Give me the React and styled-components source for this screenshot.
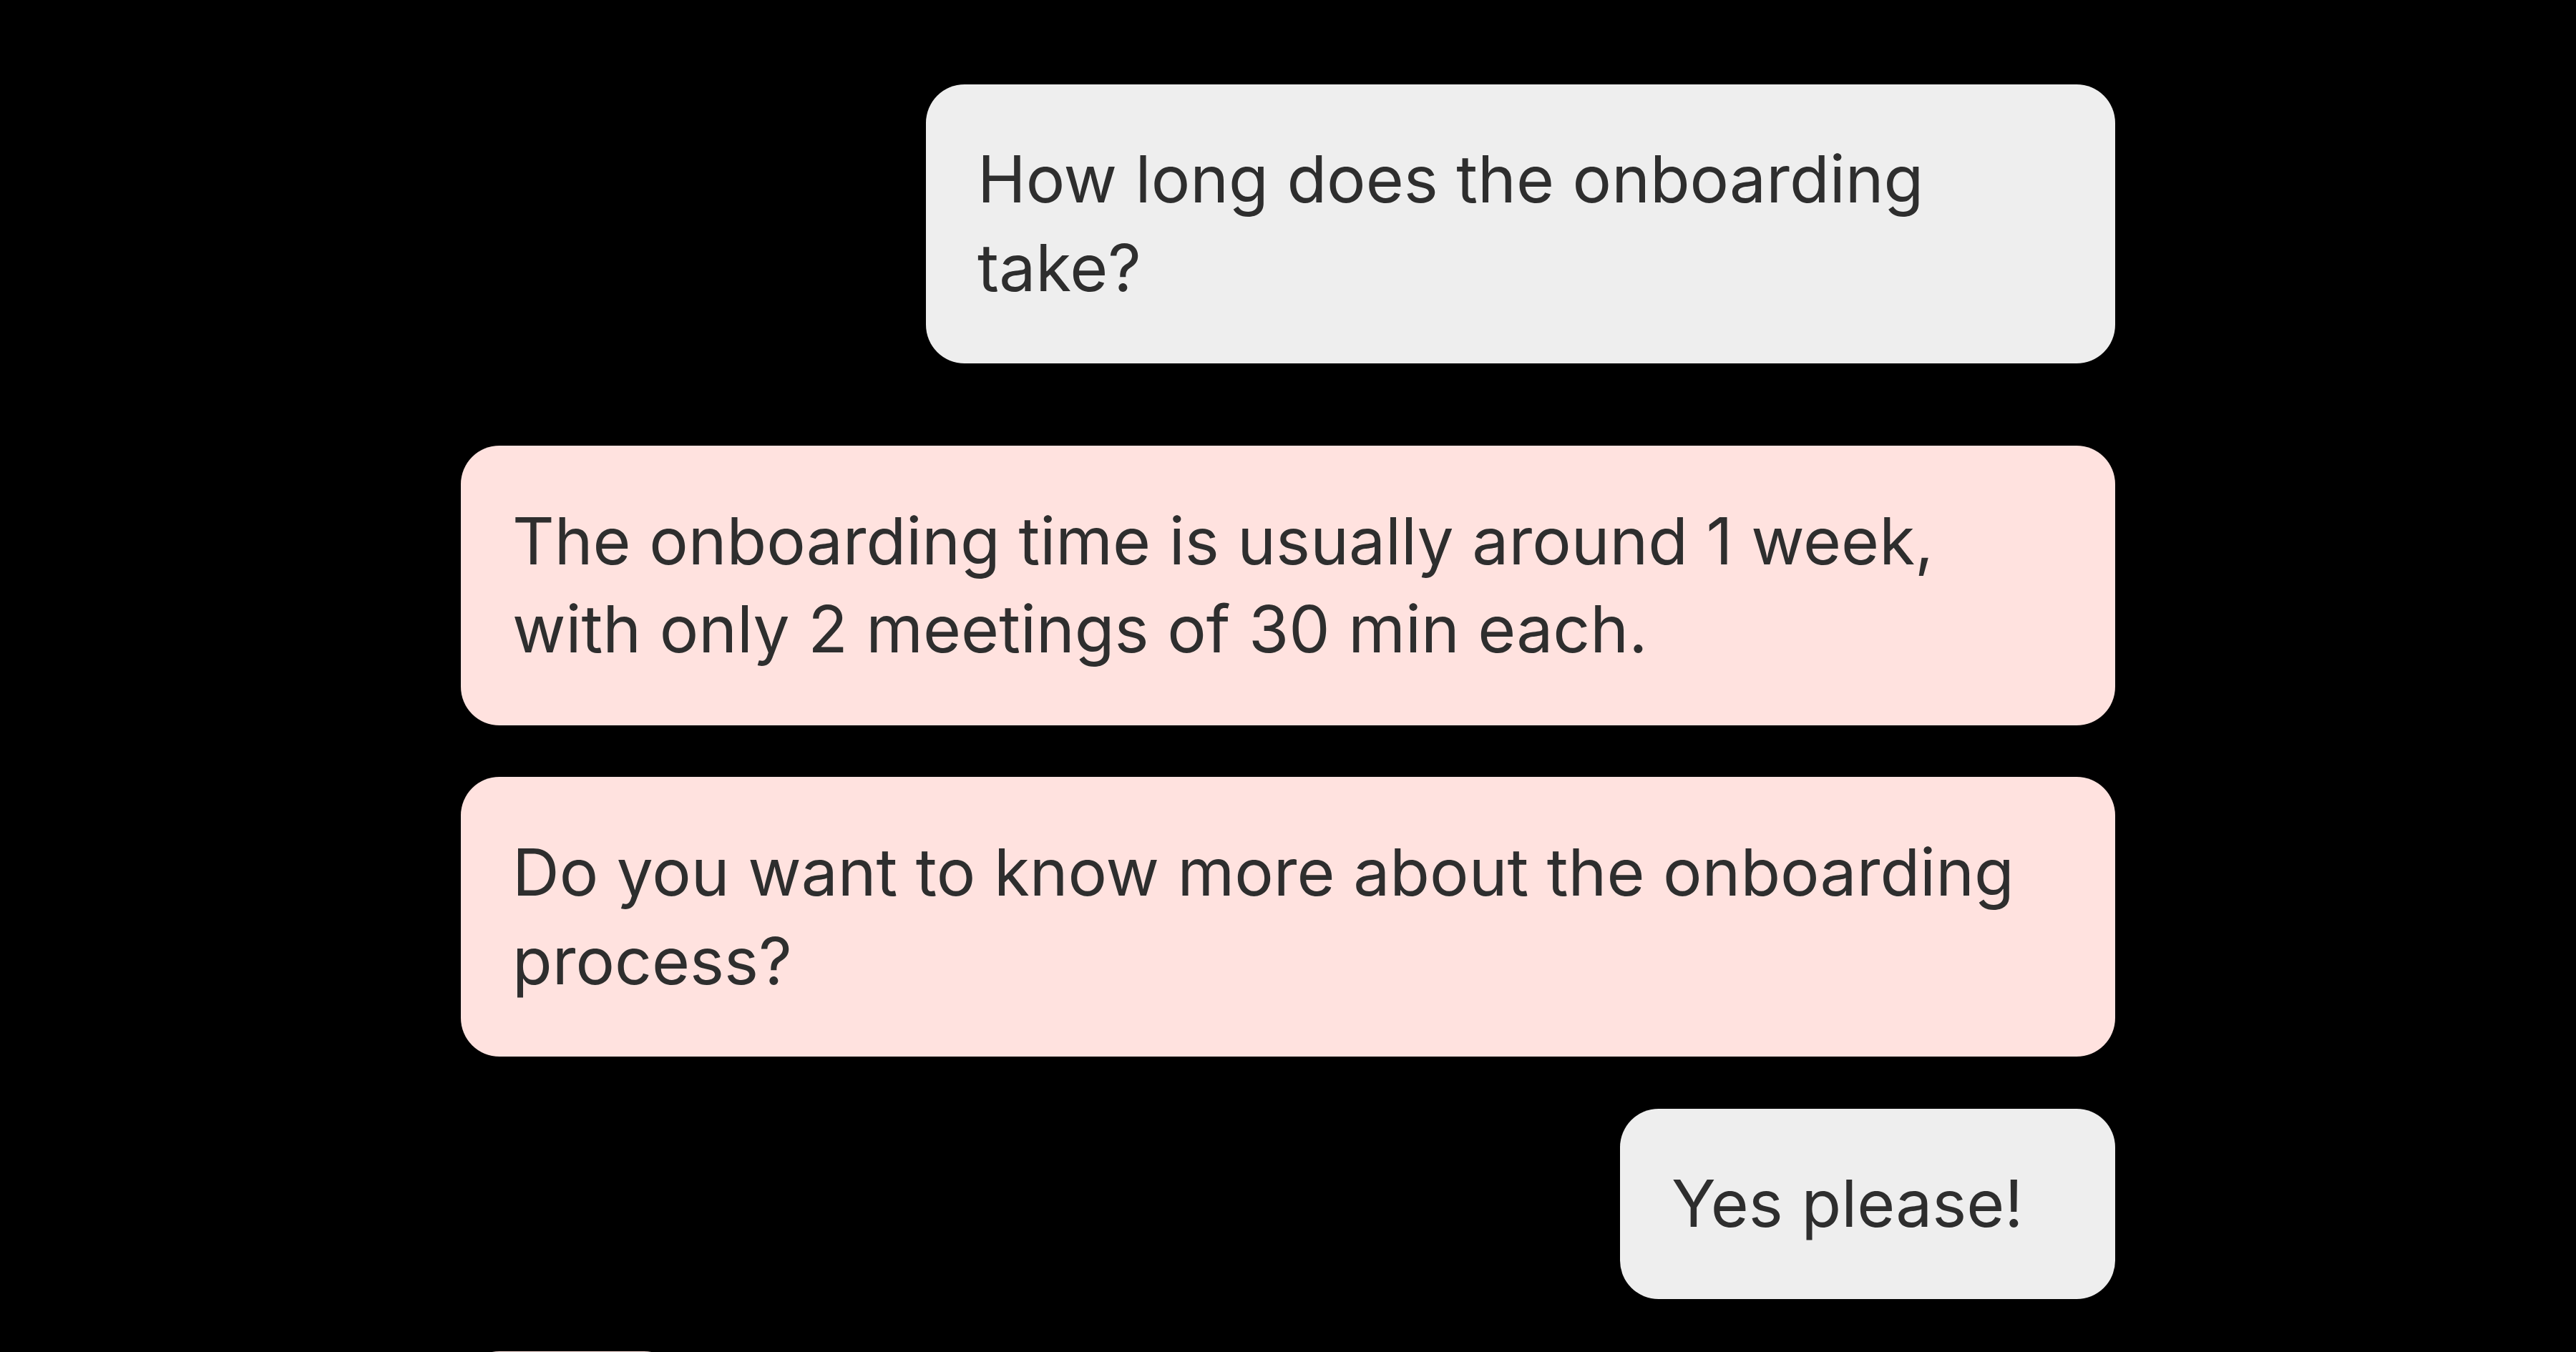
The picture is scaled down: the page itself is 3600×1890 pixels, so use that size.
import React from 'react'
import styled, { createGlobalStyle } from 'styled-components'

const GlobalStyle = createGlobalStyle`
  html, body {
    margin: 0;
    padding: 0;
    background: #000000;
  }
  body {
    font-family: Inter, "Liberation Sans", sans-serif;
    overflow: hidden;
  }
`

const GAP = 72.8

const messages = [
  { id: 1, from: 'user', text: 'How long does the onboarding take?' },
  { id: 2, from: 'bot', text: 'The onboarding time is usually around 1 week, with only 2 meetings of 30 min each.', space: 115.2 },
  { id: 3, from: 'bot', text: 'Do you want to know more about the onboarding process?' },
  { id: 4, from: 'user', text: 'Yes please!', width: 692 },
]

// chat thread, one column centered on the page
function App() {
  return (
    <>
      <GlobalStyle />
      <Page>
        <Thread>
          {messages.map((m) => (
            <Bubble
              key={m.id}
              $from={m.from}
              $space={m.space}
              $width={m.width}
            >
              {m.text}
            </Bubble>
          ))}
          {/* bot is typing, only the top edge shows */}
          <TypingBubble>
            <Dot />
            <Dot />
            <Dot />
          </TypingBubble>
        </Thread>
      </Page>
    </>
  )
}

export default App

const Page = styled.div`
  width: 100%;
  height: 1890px;
  background: #000000;
  overflow: hidden;
`

const Thread = styled.div`
  width: 2312px;
  margin: 0 auto;
  padding-top: 117.7px;
  display: flex;
  flex-direction: column;
  gap: ${GAP}px;
`

const Bubble = styled.div`
  box-sizing: border-box;
  align-self: ${(p) => (p.$from === 'user' ? 'flex-end' : 'stretch')};
  max-width: ${(p) => (p.$from === 'user' ? '1662px' : 'none')};
  width: ${(p) => (p.$width ? `${p.$width}px` : p.$from === 'user' ? 'fit-content' : 'auto')};
  margin-top: ${(p) => (p.$space ? `${p.$space - GAP}px` : '0')};
  padding: 71.3px 72px;
  border-radius: 54px;
  background: ${(p) => (p.$from === 'user' ? '#eeeeee' : '#ffe2df')};
  color: #2e2e2e;
  font-size: 91px;
  line-height: 123.9px;
  font-weight: 400;
`

const TypingBubble = styled.div`
  box-sizing: border-box;
  align-self: flex-start;
  width: 310px;
  height: 200px;
  border-radius: 54px;
  background: #ffe2df;
  display: flex;
  align-items: center;
  justify-content: center;
  gap: 24px;
`

const Dot = styled.span`
  width: 26px;
  height: 26px;
  border-radius: 50%;
  background: #2e2e2e;
`
